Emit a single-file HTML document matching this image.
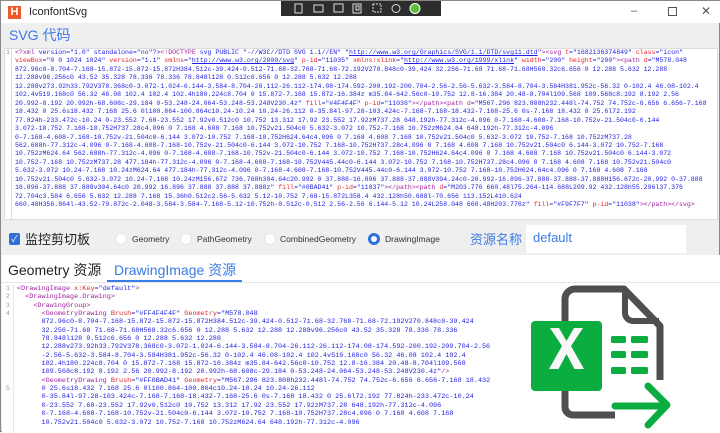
<!DOCTYPE html>
<html><head><meta charset="utf-8"><style>
*{margin:0;padding:0;box-sizing:border-box}
body{width:720px;height:432px;overflow:hidden;background:#efefef;font-family:"Liberation Sans","Noto Sans CJK SC",sans-serif;position:relative;border:1px solid #888}
.abs{position:absolute}
.code{font-family:"Liberation Mono",monospace;white-space:pre;color:#1f1fe0}
.r{color:#e8232a}.p{color:#a21fa0}.u{text-decoration:underline}
.radio{position:absolute;top:232px;width:12px;height:12px;border-radius:50%;background:#fff;border:1px solid #e3e3e3}
.rl{position:absolute;top:233px;font-size:8.5px;color:#333}
</style></head><body>
<div class="abs" style="left:0;top:0;width:720px;height:22px;background:#fff"></div>
<div class="abs" style="left:7px;top:5px;width:13px;height:13px;background:#f05a28;color:#fff;font:bold 11px 'Liberation Sans';text-align:center;line-height:13px">H</div>
<div class="abs" style="left:28px;top:5px;font-size:11px;color:#222">IconfontSvg</div>
<div class="abs" style="left:280px;top:0;width:160px;height:15px;background:#2d2d2d"></div>
<svg class="abs" style="left:280px;top:0" width="160" height="15" fill="none" stroke="#ddd" stroke-width="1">
<rect x="14" y="3" width="7" height="9"/><rect x="33" y="4" width="9" height="7"/><rect x="53" y="3" width="9" height="8"/><rect x="72" y="3" width="8" height="9"/><rect x="75" y="5" width="3" height="4"/><rect x="92" y="3" width="8" height="8" stroke-dasharray="2 1"/><circle cx="115" cy="7.5" r="4"/><circle cx="134" cy="7.5" r="5" fill="#5fbf3a" stroke="#fff"/></svg>
<div class="abs" style="left:630px;top:4px;font-size:11px;color:#555">–</div>
<div class="abs" style="left:667px;top:6px;width:9px;height:9px;border:1px solid #555"></div>
<div class="abs" style="left:700px;top:3px;font-size:12px;color:#555">✕</div>

<div class="abs" style="left:8px;top:24px;font-size:14px;color:#3b7be6">SVG 代码</div>
<div class="abs" style="left:3px;top:47px;width:714px;height:172px;background:#fff;border:1px solid #ddd"></div>
<div class="abs" style="left:10px;top:48px;width:1px;height:170px;background:#ddd"></div>
<div class="abs code" style="left:5px;top:48px;font-size:6.55px;line-height:8.45px;color:#999">1</div>
<div class="abs code" style="left:14px;top:48px;font-size:6.55px;line-height:8.45px"><span class="p">&lt;?xml</span> version="1.0" standalone="no"?&gt;<span class="p">&lt;!DOCTYPE</span> svg PUBLIC "-//W3C//DTD SVG 1.1//EN" "<span class="u">http://www.w3.org/Graphics/SVG/1.1/DTD/svg11.dtd</span>"<span class="p">&gt;&lt;svg</span> <span class="r">t</span>="1682136374849" <span class="r">class</span>="icon"
<span class="r">viewBox</span>="0 0 1024 1024" <span class="r">version</span>="1.1" <span class="r">xmlns</span>="<span class="u">http://www.w3.org/2000/svg</span>" <span class="r">p-id</span>="11035" <span class="r">xmlns:xlink</span>="<span class="u">http://www.w3.org/1999/xlink</span>" <span class="r">width</span>="200" <span class="r">height</span>="200"<span class="p">&gt;&lt;path</span> <span class="r">d</span>="M578.048
872.96c0-8.704-7.168-15.872-15.872-15.872H384.512c-39.424-0.512-71.68-32.768-71.68-72.192V270.848c0-39.424 32.256-71.68 71.68-71.68H568.32c6.656 0 12.288 5.632 12.288
12.288v96.256c0 43.52 35.328 78.336 78.336 78.848l128 0.512c6.656 0 12.288 5.632 12.288
12.288v273.92h33.792V378.368c0-3.072-1.024-6.144-3.584-8.704-26.112-26.112-174.08-174.592-200.192-200.704-2.56-2.56-5.632-3.584-8.704-3.584H381.952c-56.32 0-102.4 46.08-102.4
102.4v519.168c0 56.32 46.08 102.4 102.4 102.4h180.224c8.704 0 15.872-7.168 15.872-16.384z m35.84-642.56c0-10.752 12.8-16.384 20.48-8.704l109.568 109.568c8.192 8.192 2.56
20.992-8.192 20.992h-68.608c-29.184 0-53.248-24.064-53.248-53.248V230.4z" <span class="r">fill</span>="#4F4F4F" <span class="r">p-id</span>="11036"<span class="p">&gt;&lt;/path&gt;&lt;path</span> <span class="r">d</span>="M567.296 823.808h232.448l-74.752 74.752c-6.656 6.656-7.168
18.432 0 25.6s18.432 7.168 25.6 0l100.864-100.864c10.24-10.24 10.24-26.112 0-35.84l-97.28-103.424c-7.168-7.168-18.432-7.168-25.6 0s-7.168 18.432 0 25.6l72.192
77.824h-233.472c-10.24 0-23.552 7.68-23.552 17.92v0.512c0 10.752 13.312 17.92 23.552 17.92zM737.28 648.192h-77.312c-4.096 0-7.168-4.608-7.168-10.752v-21.504c0-6.144
3.072-10.752 7.168-10.752H737.28c4.096 0 7.168 4.608 7.168 10.752v21.504c0 5.632-3.072 10.752-7.168 10.752zM624.64 648.192h-77.312c-4.096
0-7.168-4.608-7.168-10.752v-21.504c0-6.144 3.072-10.752 7.168-10.752H624.64c4.096 0 7.168 4.608 7.168 10.752v21.504c0 5.632-3.072 10.752-7.168 10.752zM737.28
562.688h-77.312c-4.096 0-7.168-4.608-7.168-10.752v-21.504c0-6.144 3.072-10.752 7.168-10.752H737.28c4.096 0 7.168 4.608 7.168 10.752v21.504c0 6.144-3.072 10.752-7.168
10.752zM624.64 562.688h-77.312c-4.096 0-7.168-4.608-7.168-10.752v-21.504c0-6.144 3.072-10.752 7.168-10.752H624.64c4.096 0 7.168 4.608 7.168 10.752v21.504c0 6.144-3.072
10.752-7.168 10.752zM737.28 477.184h-77.312c-4.096 0-7.168-4.608-7.168-10.752V445.44c0-6.144 3.072-10.752 7.168-10.752H737.28c4.096 0 7.168 4.608 7.168 10.752v21.504c0
5.632-3.072 10.24-7.168 10.24zM624.64 477.184h-77.312c-4.096 0-7.168-4.608-7.168-10.752V445.44c0-6.144 3.072-10.752 7.168-10.752H624.64c4.096 0 7.168 4.608 7.168
10.752v21.504c0 5.632-3.072 10.24-7.168 10.24zM156.672 736.768h304.64c20.992 0 37.888-16.896 37.888-37.888V394.24c0-20.992-16.896-37.888-37.888-37.888H156.672c-20.992 0-37.888
16.896-37.888 37.888v304.64c0 20.992 16.896 37.888 37.888 37.888z" <span class="r">fill</span>="#0BAD41" <span class="r">p-id</span>="11037"<span class="p">&gt;&lt;/path&gt;&lt;path</span> <span class="r">d</span>="M203.776 660.48l75.264-114.688L209.92 432.128h55.296l37.376
72.704c3.584 6.656 5.632 12.288 7.168 15.36h0.512c2.56-5.632 5.12-10.752 7.68-15.872L358.4 432.128h50.688l-70.656 113.152L410.624
660.48H356.864l-43.52-79.872c-2.048-3.584-3.584-7.168-5.12-10.752h-0.512c-0.512 2.56-2.56 6.144-5.12 10.24L258.048 660.48H203.776z" <span class="r">fill</span>="#F9F7F7" <span class="r">p-id</span>="11038"<span class="p">&gt;&lt;/path&gt;&lt;/svg&gt;</span></div>

<div class="abs" style="left:8px;top:232px;width:11px;height:12px;background:#2f6fd6;border-radius:2px;color:#fff;font-size:9px;line-height:12px;text-align:center">✓</div>
<div class="abs" style="left:24px;top:228px;font-size:13px;color:#222">监控剪切板</div>
<div class="radio" style="left:114px"></div><div class="rl" style="left:131px">Geometry</div>
<div class="radio" style="left:179px"></div><div class="rl" style="left:196px">PathGeometry</div>
<div class="radio" style="left:263px"></div><div class="rl" style="left:279px">CombinedGeometry</div>
<div class="radio" style="left:367px;border:3px solid #2f6fd6"></div><div class="rl" style="left:384px">DrawingImage</div>
<div class="abs" style="left:469px;top:228px;font-size:13px;color:#3b7be6">资源名称</div>
<div class="abs" style="left:525px;top:224px;width:160px;height:28px;background:#fff"></div>
<div class="abs" style="left:532px;top:229px;font-size:13px;color:#3b7be6">default</div>

<div class="abs" style="left:1px;top:254px;width:718px;height:178px;background:#fff"></div>
<div class="abs" style="left:7px;top:261px;font-size:14px;line-height:16px;color:#222">Geometry 资源</div>
<div class="abs" style="left:113px;top:261px;font-size:14px;line-height:16px;color:#3b7be6">DrawingImage 资源</div>
<div class="abs" style="left:106px;top:279px;width:135px;height:2px;background:#3b7be6"></div>
<div class="abs" style="left:1px;top:281px;width:718px;height:1px;background:#e6e6e6"></div>
<div class="abs" style="left:12px;top:284px;width:1px;height:148px;background:#e8e8e8"></div>
<div class="abs code" style="left:5px;top:284px;font-size:6.5px;line-height:8.35px;color:#999">1
2
3
4








5</div>
<div class="abs code" style="left:16px;top:284px;font-size:6.8px;line-height:8.35px"><span class="p">&lt;DrawingImage</span> <span class="r">x:Key</span>="default"<span class="p">&gt;</span>
  <span class="p">&lt;DrawingImage.Drawing&gt;</span>
    <span class="p">&lt;DrawingGroup&gt;</span>
      <span class="p">&lt;GeometryDrawing</span> <span class="r">Brush</span>="#FF4F4F4F" <span class="r">Geometry</span>="M578.048
      872.96c0-8.704-7.168-15.872-15.872-15.872H384.512c-39.424-0.512-71.68-32.768-71.68-72.192V270.848c0-39.424
      32.256-71.68 71.68-71.68H568.32c6.656 0 12.288 5.632 12.288 12.288v96.256c0 43.52 35.328 78.336 78.336
      78.848l128 0.512c6.656 0 12.288 5.632 12.288
      12.288v273.92h33.792V378.368c0-3.072-1.024-6.144-3.584-8.704-26.112-26.112-174.08-174.592-200.192-200.704-2.56
      -2.56-5.632-3.584-8.704-3.584H381.952c-56.32 0-102.4 46.08-102.4 102.4v519.168c0 56.32 46.08 102.4 102.4
      102.4h180.224c8.704 0 15.872-7.168 15.872-16.384z m35.84-642.56c0-10.752 12.8-16.384 20.48-8.704l109.568
      109.568c8.192 8.192 2.56 20.992-8.192 20.992h-68.608c-29.184 0-53.248-24.064-53.248-53.248V230.4z"<span class="p">/&gt;</span>
      <span class="p">&lt;GeometryDrawing</span> <span class="r">Brush</span>="#FF0BAD41" <span class="r">Geometry</span>="M567.296 823.808h232.448l-74.752 74.752c-6.656 6.656-7.168 18.432
      0 25.6s18.432 7.168 25.6 0l100.864-100.864c10.24-10.24 10.24-26.112
      0-35.84l-97.28-103.424c-7.168-7.168-18.432-7.168-25.6 0s-7.168 18.432 0 25.6l72.192 77.824h-233.472c-10.24
      0-23.552 7.68-23.552 17.92v0.512c0 10.752 13.312 17.92 23.552 17.92zM737.28 648.192h-77.312c-4.096
      0-7.168-4.608-7.168-10.752v-21.504c0-6.144 3.072-10.752 7.168-10.752H737.28c4.096 0 7.168 4.608 7.168
      10.752v21.504c0 5.632-3.072 10.752-7.168 10.752zM624.64 648.192h-77.312c-4.096</div>

<svg class="abs" style="left:520px;top:282px" width="160" height="150" viewBox="520 282 160 150">
<path d="M614 414 H572 a8 8 0 0 1 -8 -8 V298 a10 10 0 0 1 10 -10 H623 L659 325 V379" fill="none" stroke="#4f4f4f" stroke-width="7" stroke-linejoin="round"/>
<path d="M624 290 V312 a8 8 0 0 0 8 8 H658" fill="none" stroke="#4f4f4f" stroke-width="6"/>
<rect x="530" y="320" width="71" height="70" rx="4" fill="#0bad41"/>
<path d="M548 368 L561 345 L549 327 H558 L565.5 340 L573 327 H582 L570 345 L583 368 H573.5 L565.5 353 L557.5 368Z" fill="#f9f7f7"/>
<g fill="#0bad41"><rect x="610" y="335" width="15" height="7" rx="1.5"/><rect x="630" y="335" width="17" height="7" rx="1.5"/><rect x="610" y="350" width="15" height="7" rx="1.5"/><rect x="630" y="350" width="17" height="7" rx="1.5"/><rect x="610" y="366" width="15" height="7" rx="1.5"/><rect x="630" y="366" width="17" height="7" rx="1.5"/></g>
<path d="M614 405 H665 M647 385 L666 404 L647 424" fill="none" stroke="#0bad41" stroke-width="7" stroke-linecap="round" stroke-linejoin="round"/>
</svg>
</body></html>
